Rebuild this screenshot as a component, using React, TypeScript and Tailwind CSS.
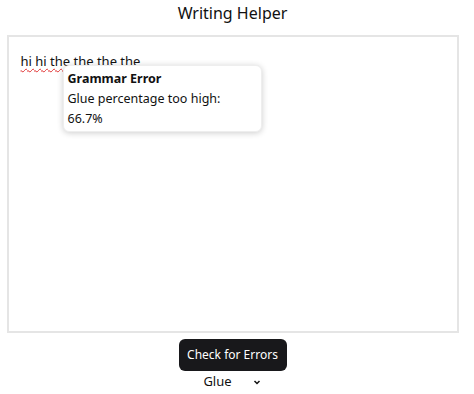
import React from "react";

export default function App() {
  return (
    <div className="w-[465px] h-[394px] bg-white flex flex-col items-center text-[#111]" style={{ fontFamily: '"Noto Sans", "Open Sans", sans-serif' }}>
      <h1 className="text-[16px] leading-[24px] mt-[1px] font-normal">Writing Helper</h1>
      <div className="relative mt-[10px] w-[452px] h-[298px] border-2 border-[#e5e5e5]">
        <div className="pl-[12px] pt-[15px] text-[13px] leading-[18px]">
          <span className="underline decoration-wavy decoration-[#e03030] decoration-1 underline-offset-2">hi hi the</span> the the the
        </div>
        <div className="absolute left-[54px] top-[28px] w-[199px] rounded-md bg-white shadow-[0_1px_6px_rgba(0,0,0,0.2)] border border-[#eee] px-[4px] pt-[3px] pb-[2px] text-[12.5px] leading-[20px]">
          <div className="font-bold">Grammar Error</div>
          <div>Glue percentage too high:</div>
          <div>66.7%</div>
        </div>
      </div>
      <button className="mt-[6px] bg-[#18181b] text-white text-[12px] rounded-md w-[108px] h-[32px]">Check for Errors</button>
      <div className="flex items-center gap-[20px] text-[13px] mt-[1px] ml-[0px]">
        <span>Glue</span>
        <svg width="10" height="10" viewBox="0 0 10 10" fill="none" stroke="#111" strokeWidth="1.5"><path d="M2.5 4l2.5 2.5L7.5 4" /></svg>
      </div>
    </div>
  );
}
